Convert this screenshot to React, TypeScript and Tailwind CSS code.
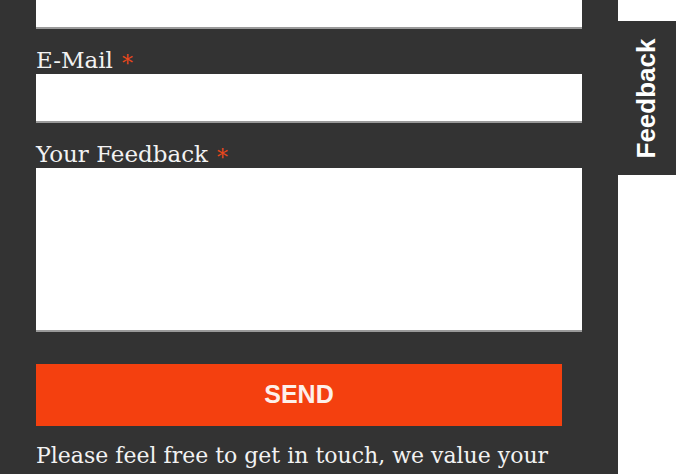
import React from "react";

const serif = { fontFamily: '"DejaVu Serif", serif' };
const sans = { fontFamily: '"Liberation Sans", Arial, sans-serif' };

function Field({ label, tall }: { label?: string; tall?: boolean }) {
  return (
    <div>
      {label && (
        <label className="flex h-[45px] items-end pb-[2px] text-[23px] leading-none text-[#f2f2f2]" style={serif}>
          {label}
          <span className="-mb-[3px] ml-[9px] text-[22px] text-[#e8471c]">*</span>
        </label>
      )}
      {tall ? (
        <textarea className="block h-[164px] w-full resize-none border-b-2 border-[#9a9a9a] bg-white outline-none" />
      ) : (
        <input className="block h-[49px] w-full border-b-2 border-[#9a9a9a] bg-white outline-none" />
      )}
    </div>
  );
}

export default function App() {
  return (
    <div className="flex h-[474px] w-[680px] overflow-hidden bg-white">
      <div className="h-[474px] w-[618px] shrink-0 overflow-hidden bg-[#333333] pl-[36px] pr-[36px]">
        <div className="-mt-[20px]">
          <Field />
        </div>
        <Field label="E-Mail" />
        <Field label="Your Feedback" tall />
        <button className="mt-[32px] h-[62px] w-[526px] bg-[#f4400f] text-[25px] font-bold text-[#fdf0ea]" style={sans}>
          SEND
        </button>
        <p className="mt-[15px] text-[22px] leading-[30px] text-[#f2f2f2]" style={serif}>
          Please feel free to get in touch, we value your feedback.
        </p>
      </div>
      <div className="mt-[21px] flex h-[154px] w-[58px] shrink-0 items-center justify-center self-start bg-[#333333]">
        <span className="block -rotate-90 whitespace-nowrap text-[26px] font-bold text-white" style={sans}>
          Feedback
        </span>
      </div>
    </div>
  );
}
